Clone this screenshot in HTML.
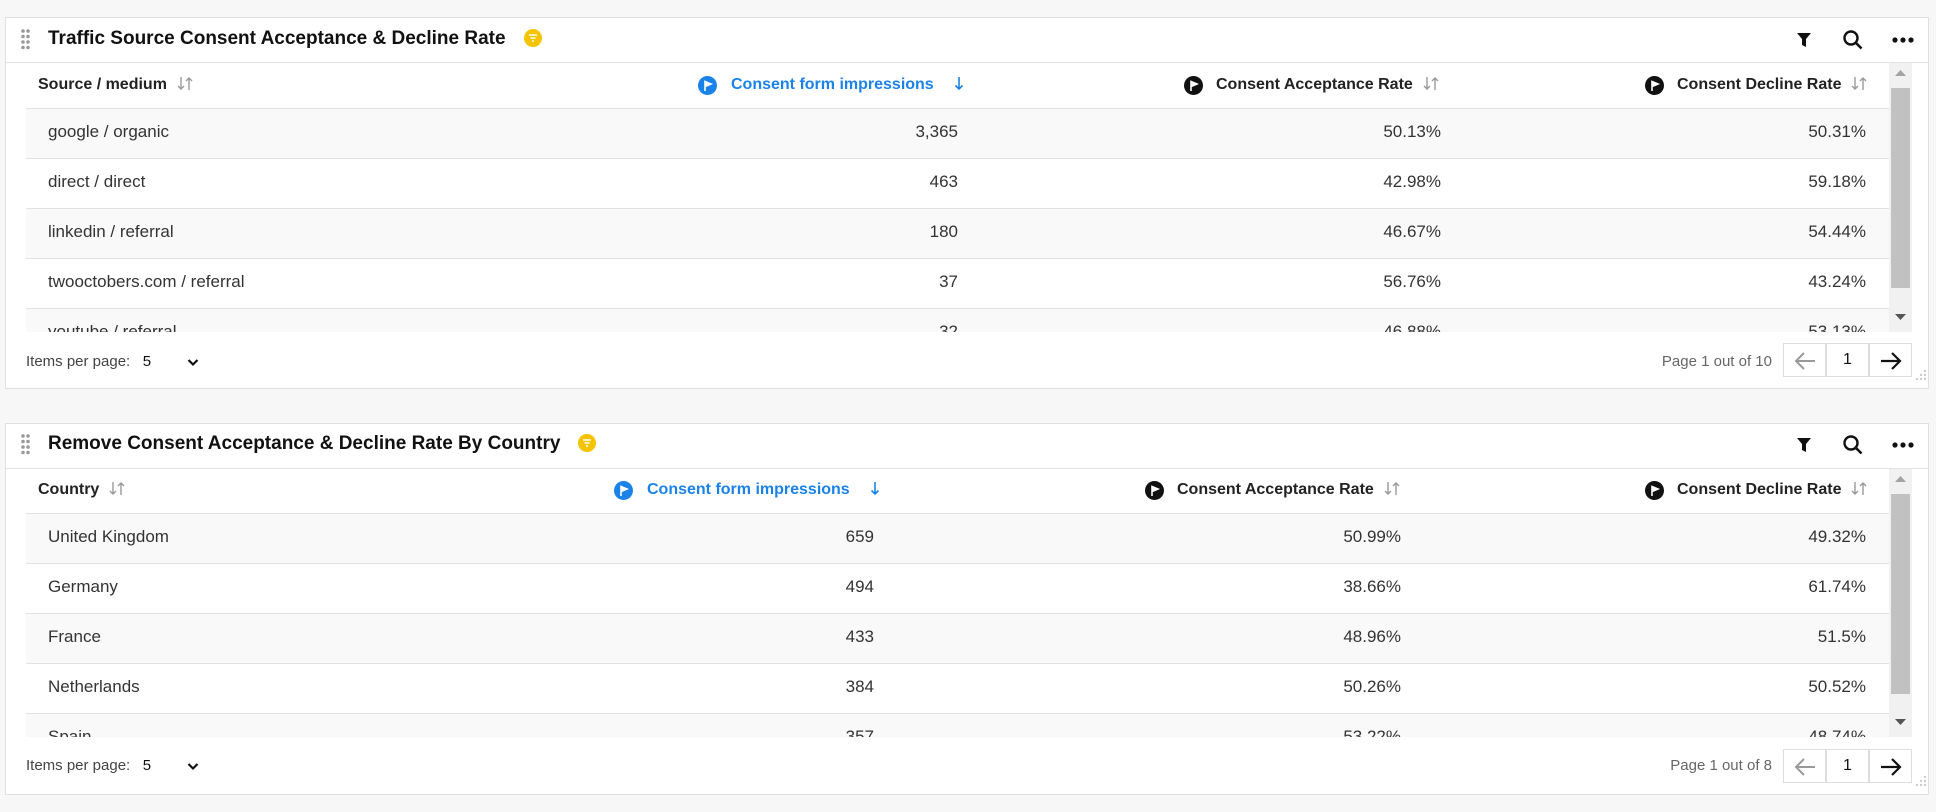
<!DOCTYPE html>
<html><head><meta charset="utf-8"><style>
*{margin:0;padding:0;box-sizing:border-box}
body{width:1936px;height:812px;background:#f7f7f7;font-family:"Liberation Sans",sans-serif;color:#222;position:relative;overflow:hidden}
.a{position:absolute}
.panel{position:absolute;left:5px;width:1924px;background:#fff;border:1px solid #e0e0e0}
.title{font-size:19px;font-weight:bold;color:#111;line-height:24px;white-space:nowrap}
.hdr{font-size:16px;font-weight:bold;color:#222;line-height:20px;white-space:nowrap}
.blue{color:#1a82e8}
.cell{font-size:17px;color:#333;line-height:22px;white-space:nowrap}
.r{text-align:right}
.line{position:absolute;left:26px;width:1863px;height:1px;background:#e2e2e2}
.shade{position:absolute;left:26px;width:1863px;height:50px;background:#f9f9f9}
.foot{font-size:15px;color:#444;line-height:20px;white-space:nowrap}
.pg{position:absolute;top:0;height:34px;width:43px;border:1px solid #ddd;background:#fff;text-align:center;line-height:32px;font-size:16px}
.pg svg{position:absolute;left:10px;top:7px}
.srt{display:inline-block;vertical-align:-2px;margin-left:10px}
</style></head><body>

<!-- PANEL 1 -->
<div class="panel" style="top:17px;height:372px"></div>
<div class="a" style="left:6px;top:62px;width:1922px;height:1px;background:#e2e2e2"></div>
<svg class="a" style="left:21px;top:29px" width="10" height="22"><g fill="#999"><circle cx="2" cy="2" r="1.8"/><circle cx="7" cy="2" r="1.8"/><circle cx="2" cy="7.5" r="1.8"/><circle cx="7" cy="7.5" r="1.8"/><circle cx="2" cy="13" r="1.8"/><circle cx="7" cy="13" r="1.8"/><circle cx="2" cy="18.5" r="1.8"/><circle cx="7" cy="18.5" r="1.8"/></g></svg>
<div class="a title" style="left:48px;top:27px">Traffic Source Consent Acceptance &amp; Decline Rate</div>
<svg class="a" style="left:524px;top:29px" width="18" height="18"><circle cx="9" cy="9" r="9" fill="#f5c400"/><path d="M5 6h8M6.5 9h5M8 12h2" stroke="#fff" stroke-width="1.6"/></svg>
<svg class="a" style="left:1796px;top:32px" width="16" height="16"><path d="M1 1h14l-5 6v8l-4-2V7z" fill="#111"/></svg>
<svg class="a" style="left:1842px;top:29px" width="22" height="22"><circle cx="9" cy="9" r="6.5" fill="none" stroke="#111" stroke-width="2.4"/><path d="M13.5 13.5l6 6" stroke="#111" stroke-width="2.6"/></svg>
<svg class="a" style="left:1892px;top:36px" width="22" height="8"><circle cx="3" cy="4" r="2.6" fill="#111"/><circle cx="11" cy="4" r="2.6" fill="#111"/><circle cx="19" cy="4" r="2.6" fill="#111"/></svg>

<div class="shade" style="top:109px"></div>
<div class="shade" style="top:209px;height:49px"></div>
<div class="shade" style="top:309px;height:23px"></div>
<div class="line" style="top:108px"></div>
<div class="line" style="top:158px"></div>
<div class="line" style="top:208px"></div>
<div class="line" style="top:258px"></div>
<div class="line" style="top:308px"></div>

<div class="a hdr" style="left:38px;top:75px">Source / medium<svg class="srt" width="16" height="15"><path d="M4 1v12M1 10l3 3 3-3M12 14V2M9 5l3-3 3 3" stroke="#999" stroke-width="1.4" fill="none"/></svg></div>
<svg class="a" style="left:698px;top:76px" width="19" height="19"><circle cx="9.5" cy="9.5" r="9.5" fill="#1a82e8"/><path d="M7 5v10M7 5.5l6 2.5-6 2.5z" stroke="#fff" fill="#fff" stroke-width="1.6"/></svg>
<div class="a hdr blue" style="left:731px;top:75px">Consent form impressions<svg class="srt" style="margin-left:20px" width="10" height="15"><path d="M5 1v12M1.5 9.5L5 13l3.5-3.5" stroke="#1a82e8" stroke-width="1.6" fill="none"/></svg></div>
<svg class="a" style="left:1184px;top:76px" width="19" height="19"><circle cx="9.5" cy="9.5" r="9.5" fill="#111"/><path d="M7 5v10M7 5.5l6 2.5-6 2.5z" stroke="#fff" fill="#fff" stroke-width="1.6"/></svg>
<div class="a hdr" style="left:1216px;top:75px">Consent Acceptance Rate<svg class="srt" width="16" height="15"><path d="M4 1v12M1 10l3 3 3-3M12 14V2M9 5l3-3 3 3" stroke="#999" stroke-width="1.4" fill="none"/></svg></div>
<svg class="a" style="left:1645px;top:76px" width="19" height="19"><circle cx="9.5" cy="9.5" r="9.5" fill="#111"/><path d="M7 5v10M7 5.5l6 2.5-6 2.5z" stroke="#fff" fill="#fff" stroke-width="1.6"/></svg>
<div class="a hdr" style="left:1677px;top:75px">Consent Decline Rate<svg class="srt" width="16" height="15"><path d="M4 1v12M1 10l3 3 3-3M12 14V2M9 5l3-3 3 3" stroke="#999" stroke-width="1.4" fill="none"/></svg></div>

<div class="a" style="left:0;top:108px;width:1889px;height:224px;overflow:hidden">
<div class="a cell" style="left:48px;top:13px">google / organic</div>
<div class="a cell" style="left:48px;top:63px">direct / direct</div>
<div class="a cell" style="left:48px;top:113px">linkedin / referral</div>
<div class="a cell" style="left:48px;top:163px">twooctobers.com / referral</div>
<div class="a cell" style="left:48px;top:213px">youtube / referral</div>
<div class="a cell r" style="right:931px;top:13px">3,365</div>
<div class="a cell r" style="right:931px;top:63px">463</div>
<div class="a cell r" style="right:931px;top:113px">180</div>
<div class="a cell r" style="right:931px;top:163px">37</div>
<div class="a cell r" style="right:931px;top:213px">32</div>
<div class="a cell r" style="right:448px;top:13px">50.13%</div>
<div class="a cell r" style="right:448px;top:63px">42.98%</div>
<div class="a cell r" style="right:448px;top:113px">46.67%</div>
<div class="a cell r" style="right:448px;top:163px">56.76%</div>
<div class="a cell r" style="right:448px;top:213px">46.88%</div>
<div class="a cell r" style="right:23px;top:13px">50.31%</div>
<div class="a cell r" style="right:23px;top:63px">59.18%</div>
<div class="a cell r" style="right:23px;top:113px">54.44%</div>
<div class="a cell r" style="right:23px;top:163px">43.24%</div>
<div class="a cell r" style="right:23px;top:213px">53.13%</div>
</div>
<div class="a" style="left:1889px;top:63px;width:23px;height:269px;background:#f1f1f1"></div>
<div class="a" style="left:1891px;top:88px;width:19px;height:200px;background:#c1c1c1"></div>
<svg class="a" style="left:1895px;top:70px" width="11" height="7"><path d="M0 6L5.5 0 11 6z" fill="#a3a3a3"/></svg>
<svg class="a" style="left:1895px;top:314px" width="11" height="7"><path d="M0 0L5.5 6 11 0z" fill="#555"/></svg>

<div class="a foot" style="left:26px;top:352px">Items per page: &nbsp;&nbsp;<span style="color:#111">5</span></div>
<svg class="a" style="left:187px;top:358px" width="12" height="9"><path d="M1.5 2l4.5 4.5L10.5 2" stroke="#111" stroke-width="2.2" fill="none"/></svg>
<div class="a foot" style="right:164px;top:352px;color:#666">Page 1 out of 10</div>
<div class="a" style="left:1783px;top:343px;width:130px;height:34px">
<div class="pg" style="left:0"><svg width="22" height="20"><path d="M21 10H2M10 2L2 10l8 8" stroke="#999" stroke-width="2" fill="none"/></svg></div>
<div class="pg" style="left:43px;color:#111">1</div>
<div class="pg" style="left:86px"><svg width="22" height="20"><path d="M1 10h19M12 2l8 8-8 8" stroke="#111" stroke-width="2.2" fill="none"/></svg></div>
</div>
<svg class="a" style="left:1915px;top:369px" width="12" height="12"><g fill="#ccc"><circle cx="10" cy="2" r="1.2"/><circle cx="6" cy="6" r="1.2"/><circle cx="10" cy="6" r="1.2"/><circle cx="2" cy="10" r="1.2"/><circle cx="6" cy="10" r="1.2"/><circle cx="10" cy="10" r="1.2"/></g></svg>

<!-- PANEL 2 -->
<div class="panel" style="top:423px;height:372px"></div>
<div class="a" style="left:6px;top:468px;width:1922px;height:1px;background:#e2e2e2"></div>
<svg class="a" style="left:21px;top:434px" width="10" height="22"><g fill="#999"><circle cx="2" cy="2" r="1.8"/><circle cx="7" cy="2" r="1.8"/><circle cx="2" cy="7.5" r="1.8"/><circle cx="7" cy="7.5" r="1.8"/><circle cx="2" cy="13" r="1.8"/><circle cx="7" cy="13" r="1.8"/><circle cx="2" cy="18.5" r="1.8"/><circle cx="7" cy="18.5" r="1.8"/></g></svg>
<div class="a title" style="left:48px;top:432px">Remove Consent Acceptance &amp; Decline Rate By Country</div>
<svg class="a" style="left:578px;top:434px" width="18" height="18"><circle cx="9" cy="9" r="9" fill="#f5c400"/><path d="M5 6h8M6.5 9h5M8 12h2" stroke="#fff" stroke-width="1.6"/></svg>
<svg class="a" style="left:1796px;top:437px" width="16" height="16"><path d="M1 1h14l-5 6v8l-4-2V7z" fill="#111"/></svg>
<svg class="a" style="left:1842px;top:434px" width="22" height="22"><circle cx="9" cy="9" r="6.5" fill="none" stroke="#111" stroke-width="2.4"/><path d="M13.5 13.5l6 6" stroke="#111" stroke-width="2.6"/></svg>
<svg class="a" style="left:1892px;top:441px" width="22" height="8"><circle cx="3" cy="4" r="2.6" fill="#111"/><circle cx="11" cy="4" r="2.6" fill="#111"/><circle cx="19" cy="4" r="2.6" fill="#111"/></svg>

<div class="shade" style="top:514px"></div>
<div class="shade" style="top:614px;height:49px"></div>
<div class="shade" style="top:714px;height:23px"></div>
<div class="line" style="top:513px"></div>
<div class="line" style="top:563px"></div>
<div class="line" style="top:613px"></div>
<div class="line" style="top:663px"></div>
<div class="line" style="top:713px"></div>

<div class="a hdr" style="left:38px;top:480px">Country<svg class="srt" width="16" height="15"><path d="M4 1v12M1 10l3 3 3-3M12 14V2M9 5l3-3 3 3" stroke="#999" stroke-width="1.4" fill="none"/></svg></div>
<svg class="a" style="left:614px;top:481px" width="19" height="19"><circle cx="9.5" cy="9.5" r="9.5" fill="#1a82e8"/><path d="M7 5v10M7 5.5l6 2.5-6 2.5z" stroke="#fff" fill="#fff" stroke-width="1.6"/></svg>
<div class="a hdr blue" style="left:647px;top:480px">Consent form impressions<svg class="srt" style="margin-left:20px" width="10" height="15"><path d="M5 1v12M1.5 9.5L5 13l3.5-3.5" stroke="#1a82e8" stroke-width="1.6" fill="none"/></svg></div>
<svg class="a" style="left:1145px;top:481px" width="19" height="19"><circle cx="9.5" cy="9.5" r="9.5" fill="#111"/><path d="M7 5v10M7 5.5l6 2.5-6 2.5z" stroke="#fff" fill="#fff" stroke-width="1.6"/></svg>
<div class="a hdr" style="left:1177px;top:480px">Consent Acceptance Rate<svg class="srt" width="16" height="15"><path d="M4 1v12M1 10l3 3 3-3M12 14V2M9 5l3-3 3 3" stroke="#999" stroke-width="1.4" fill="none"/></svg></div>
<svg class="a" style="left:1645px;top:481px" width="19" height="19"><circle cx="9.5" cy="9.5" r="9.5" fill="#111"/><path d="M7 5v10M7 5.5l6 2.5-6 2.5z" stroke="#fff" fill="#fff" stroke-width="1.6"/></svg>
<div class="a hdr" style="left:1677px;top:480px">Consent Decline Rate<svg class="srt" width="16" height="15"><path d="M4 1v12M1 10l3 3 3-3M12 14V2M9 5l3-3 3 3" stroke="#999" stroke-width="1.4" fill="none"/></svg></div>

<div class="a" style="left:0;top:513px;width:1889px;height:224px;overflow:hidden">
<div class="a cell" style="left:48px;top:13px">United Kingdom</div>
<div class="a cell" style="left:48px;top:63px">Germany</div>
<div class="a cell" style="left:48px;top:113px">France</div>
<div class="a cell" style="left:48px;top:163px">Netherlands</div>
<div class="a cell" style="left:48px;top:213px">Spain</div>
<div class="a cell r" style="right:1015px;top:13px">659</div>
<div class="a cell r" style="right:1015px;top:63px">494</div>
<div class="a cell r" style="right:1015px;top:113px">433</div>
<div class="a cell r" style="right:1015px;top:163px">384</div>
<div class="a cell r" style="right:1015px;top:213px">357</div>
<div class="a cell r" style="right:488px;top:13px">50.99%</div>
<div class="a cell r" style="right:488px;top:63px">38.66%</div>
<div class="a cell r" style="right:488px;top:113px">48.96%</div>
<div class="a cell r" style="right:488px;top:163px">50.26%</div>
<div class="a cell r" style="right:488px;top:213px">53.22%</div>
<div class="a cell r" style="right:23px;top:13px">49.32%</div>
<div class="a cell r" style="right:23px;top:63px">61.74%</div>
<div class="a cell r" style="right:23px;top:113px">51.5%</div>
<div class="a cell r" style="right:23px;top:163px">50.52%</div>
<div class="a cell r" style="right:23px;top:213px">48.74%</div>
</div>
<div class="a" style="left:1889px;top:469px;width:23px;height:268px;background:#f1f1f1"></div>
<div class="a" style="left:1891px;top:494px;width:19px;height:200px;background:#c1c1c1"></div>
<svg class="a" style="left:1895px;top:476px" width="11" height="7"><path d="M0 6L5.5 0 11 6z" fill="#a3a3a3"/></svg>
<svg class="a" style="left:1895px;top:719px" width="11" height="7"><path d="M0 0L5.5 6 11 0z" fill="#555"/></svg>

<div class="a foot" style="left:26px;top:756px">Items per page: &nbsp;&nbsp;<span style="color:#111">5</span></div>
<svg class="a" style="left:187px;top:762px" width="12" height="9"><path d="M1.5 2l4.5 4.5L10.5 2" stroke="#111" stroke-width="2.2" fill="none"/></svg>
<div class="a foot" style="right:164px;top:756px;color:#666">Page 1 out of 8</div>
<div class="a" style="left:1783px;top:749px;width:130px;height:34px">
<div class="pg" style="left:0"><svg width="22" height="20"><path d="M21 10H2M10 2L2 10l8 8" stroke="#999" stroke-width="2" fill="none"/></svg></div>
<div class="pg" style="left:43px;color:#111">1</div>
<div class="pg" style="left:86px"><svg width="22" height="20"><path d="M1 10h19M12 2l8 8-8 8" stroke="#111" stroke-width="2.2" fill="none"/></svg></div>
</div>
<svg class="a" style="left:1915px;top:775px" width="12" height="12"><g fill="#ccc"><circle cx="10" cy="2" r="1.2"/><circle cx="6" cy="6" r="1.2"/><circle cx="10" cy="6" r="1.2"/><circle cx="2" cy="10" r="1.2"/><circle cx="6" cy="10" r="1.2"/><circle cx="10" cy="10" r="1.2"/></g></svg>
</body></html>
